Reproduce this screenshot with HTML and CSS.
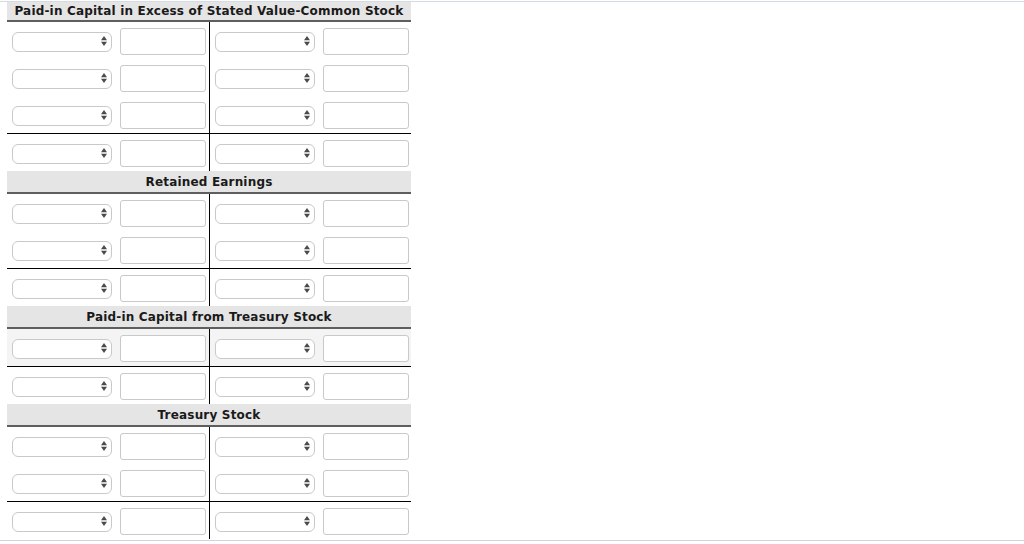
FILE: index.html
```html
<!DOCTYPE html>
<html lang="en">
<head>
<meta charset="utf-8">
<title>Ledger</title>
<link rel="stylesheet" href="styles.css">
</head>
<body>
<div class="page">
  <div class="ledger">
    <section class="sec">
      <div class="hdr hdr-first">Paid-in Capital in Excess of Stated Value-Common Stock</div>
      <div class="row">
        <div class="cell cell-l"><span class="sel"><select class="dd"><option></option></select><svg class="arr" viewBox="0 0 6 10" width="6" height="10"><polygon points="3,0 6,4.2 0,4.2"/><polygon points="0,5.8 6,5.8 3,10"/></svg></span><input class="amt" type="text"></div>
        <div class="cell"><span class="sel"><select class="dd"><option></option></select><svg class="arr" viewBox="0 0 6 10" width="6" height="10"><polygon points="3,0 6,4.2 0,4.2"/><polygon points="0,5.8 6,5.8 3,10"/></svg></span><input class="amt" type="text"></div>
      </div>
      <div class="row">
        <div class="cell cell-l"><span class="sel"><select class="dd"><option></option></select><svg class="arr" viewBox="0 0 6 10" width="6" height="10"><polygon points="3,0 6,4.2 0,4.2"/><polygon points="0,5.8 6,5.8 3,10"/></svg></span><input class="amt" type="text"></div>
        <div class="cell"><span class="sel"><select class="dd"><option></option></select><svg class="arr" viewBox="0 0 6 10" width="6" height="10"><polygon points="3,0 6,4.2 0,4.2"/><polygon points="0,5.8 6,5.8 3,10"/></svg></span><input class="amt" type="text"></div>
      </div>
      <div class="row">
        <div class="cell cell-l"><span class="sel"><select class="dd"><option></option></select><svg class="arr" viewBox="0 0 6 10" width="6" height="10"><polygon points="3,0 6,4.2 0,4.2"/><polygon points="0,5.8 6,5.8 3,10"/></svg></span><input class="amt" type="text"></div>
        <div class="cell"><span class="sel"><select class="dd"><option></option></select><svg class="arr" viewBox="0 0 6 10" width="6" height="10"><polygon points="3,0 6,4.2 0,4.2"/><polygon points="0,5.8 6,5.8 3,10"/></svg></span><input class="amt" type="text"></div>
      </div>
      <div class="row row-total">
        <div class="cell cell-l"><span class="sel"><select class="dd"><option></option></select><svg class="arr" viewBox="0 0 6 10" width="6" height="10"><polygon points="3,0 6,4.2 0,4.2"/><polygon points="0,5.8 6,5.8 3,10"/></svg></span><input class="amt" type="text"></div>
        <div class="cell"><span class="sel"><select class="dd"><option></option></select><svg class="arr" viewBox="0 0 6 10" width="6" height="10"><polygon points="3,0 6,4.2 0,4.2"/><polygon points="0,5.8 6,5.8 3,10"/></svg></span><input class="amt" type="text"></div>
      </div>
    </section>

    <section class="sec">
      <div class="hdr">Retained Earnings</div>
      <div class="row">
        <div class="cell cell-l"><span class="sel"><select class="dd"><option></option></select><svg class="arr" viewBox="0 0 6 10" width="6" height="10"><polygon points="3,0 6,4.2 0,4.2"/><polygon points="0,5.8 6,5.8 3,10"/></svg></span><input class="amt" type="text"></div>
        <div class="cell"><span class="sel"><select class="dd"><option></option></select><svg class="arr" viewBox="0 0 6 10" width="6" height="10"><polygon points="3,0 6,4.2 0,4.2"/><polygon points="0,5.8 6,5.8 3,10"/></svg></span><input class="amt" type="text"></div>
      </div>
      <div class="row">
        <div class="cell cell-l"><span class="sel"><select class="dd"><option></option></select><svg class="arr" viewBox="0 0 6 10" width="6" height="10"><polygon points="3,0 6,4.2 0,4.2"/><polygon points="0,5.8 6,5.8 3,10"/></svg></span><input class="amt" type="text"></div>
        <div class="cell"><span class="sel"><select class="dd"><option></option></select><svg class="arr" viewBox="0 0 6 10" width="6" height="10"><polygon points="3,0 6,4.2 0,4.2"/><polygon points="0,5.8 6,5.8 3,10"/></svg></span><input class="amt" type="text"></div>
      </div>
      <div class="row row-total">
        <div class="cell cell-l"><span class="sel"><select class="dd"><option></option></select><svg class="arr" viewBox="0 0 6 10" width="6" height="10"><polygon points="3,0 6,4.2 0,4.2"/><polygon points="0,5.8 6,5.8 3,10"/></svg></span><input class="amt" type="text"></div>
        <div class="cell"><span class="sel"><select class="dd"><option></option></select><svg class="arr" viewBox="0 0 6 10" width="6" height="10"><polygon points="3,0 6,4.2 0,4.2"/><polygon points="0,5.8 6,5.8 3,10"/></svg></span><input class="amt" type="text"></div>
      </div>
    </section>

    <section class="sec">
      <div class="hdr">Paid-in Capital from Treasury Stock</div>
      <div class="row row-shade">
        <div class="cell cell-l"><span class="sel"><select class="dd"><option></option></select><svg class="arr" viewBox="0 0 6 10" width="6" height="10"><polygon points="3,0 6,4.2 0,4.2"/><polygon points="0,5.8 6,5.8 3,10"/></svg></span><input class="amt" type="text"></div>
        <div class="cell"><span class="sel"><select class="dd"><option></option></select><svg class="arr" viewBox="0 0 6 10" width="6" height="10"><polygon points="3,0 6,4.2 0,4.2"/><polygon points="0,5.8 6,5.8 3,10"/></svg></span><input class="amt" type="text"></div>
      </div>
      <div class="row row-total">
        <div class="cell cell-l"><span class="sel"><select class="dd"><option></option></select><svg class="arr" viewBox="0 0 6 10" width="6" height="10"><polygon points="3,0 6,4.2 0,4.2"/><polygon points="0,5.8 6,5.8 3,10"/></svg></span><input class="amt" type="text"></div>
        <div class="cell"><span class="sel"><select class="dd"><option></option></select><svg class="arr" viewBox="0 0 6 10" width="6" height="10"><polygon points="3,0 6,4.2 0,4.2"/><polygon points="0,5.8 6,5.8 3,10"/></svg></span><input class="amt" type="text"></div>
      </div>
    </section>

    <section class="sec">
      <div class="hdr">Treasury Stock</div>
      <div class="row">
        <div class="cell cell-l"><span class="sel"><select class="dd"><option></option></select><svg class="arr" viewBox="0 0 6 10" width="6" height="10"><polygon points="3,0 6,4.2 0,4.2"/><polygon points="0,5.8 6,5.8 3,10"/></svg></span><input class="amt" type="text"></div>
        <div class="cell"><span class="sel"><select class="dd"><option></option></select><svg class="arr" viewBox="0 0 6 10" width="6" height="10"><polygon points="3,0 6,4.2 0,4.2"/><polygon points="0,5.8 6,5.8 3,10"/></svg></span><input class="amt" type="text"></div>
      </div>
      <div class="row">
        <div class="cell cell-l"><span class="sel"><select class="dd"><option></option></select><svg class="arr" viewBox="0 0 6 10" width="6" height="10"><polygon points="3,0 6,4.2 0,4.2"/><polygon points="0,5.8 6,5.8 3,10"/></svg></span><input class="amt" type="text"></div>
        <div class="cell"><span class="sel"><select class="dd"><option></option></select><svg class="arr" viewBox="0 0 6 10" width="6" height="10"><polygon points="3,0 6,4.2 0,4.2"/><polygon points="0,5.8 6,5.8 3,10"/></svg></span><input class="amt" type="text"></div>
      </div>
      <div class="row row-total">
        <div class="cell cell-l"><span class="sel"><select class="dd"><option></option></select><svg class="arr" viewBox="0 0 6 10" width="6" height="10"><polygon points="3,0 6,4.2 0,4.2"/><polygon points="0,5.8 6,5.8 3,10"/></svg></span><input class="amt" type="text"></div>
        <div class="cell"><span class="sel"><select class="dd"><option></option></select><svg class="arr" viewBox="0 0 6 10" width="6" height="10"><polygon points="3,0 6,4.2 0,4.2"/><polygon points="0,5.8 6,5.8 3,10"/></svg></span><input class="amt" type="text"></div>
      </div>
    </section>
  </div>
</div>
</body>
</html>
```

FILE: styles.css
```css
* {
  box-sizing: border-box;
}

html, body {
  margin: 0;
  padding: 0;
  background: #ffffff;
}

body {
  font-family: "DejaVu Sans", Verdana, sans-serif;
  color: #1a1a1a;
}

.page {
  margin-top: 1px;
  border-top: 1px solid #d4dbe3;
  border-bottom: 1px solid #cdd4dc;
  padding: 0 0 1px 7px;
  width: 1024px;
}

.ledger {
  width: 404px;
}

.hdr {
  height: 23px;
  padding-top: 1px;
  line-height: 20px;
  background: #e5e5e5;
  border-bottom: 2px solid #5e5e5e;
  font-size: 12px;
  letter-spacing: 0.18px;
  font-weight: bold;
  text-align: center;
  white-space: nowrap;
}

.hdr-first {
  height: 20px;
  padding-top: 1px;
  line-height: 17px;
}

.row {
  display: grid;
  grid-template-columns: 203px 201px;
}

.row-total {
  border-top: 1px solid #000000;
}

.row-shade {
  background: #f4f4f4;
}

.cell {
  height: 37px;
  padding: 6px 0 4px 5px;
  display: flex;
  align-items: center;
}

.cell-l {
  border-right: 1px solid #000000;
}

.sel {
  position: relative;
  display: block;
  width: 100px;
  height: 20px;
  margin-right: 8px;
  flex: none;
}

.dd {
  -webkit-appearance: none;
  appearance: none;
  display: block;
  width: 100px;
  height: 20px;
  margin: 0;
  padding: 0;
  border: 1px solid #c9c9c9;
  border-radius: 6px;
  background: #ffffff;
  font-size: 12px;
  outline: none;
}

.arr {
  position: absolute;
  right: 5px;
  top: 4px;
  fill: #4a4a4a;
  pointer-events: none;
}

.amt {
  display: block;
  width: 86px;
  height: 27px;
  margin: 0;
  padding: 0 4px;
  border: 1px solid #c9c9c9;
  border-radius: 3px;
  background: #ffffff;
  font-size: 12px;
  outline: none;
  flex: none;
}
```
